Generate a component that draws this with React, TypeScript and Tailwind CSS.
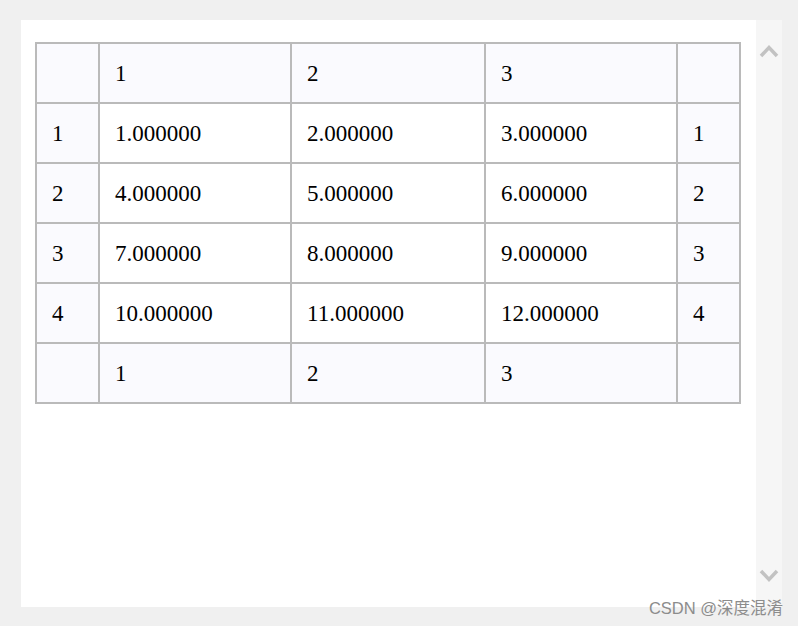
const rows = [
  ["1", "1.000000", "2.000000", "3.000000", "1"],
  ["2", "4.000000", "5.000000", "6.000000", "2"],
  ["3", "7.000000", "8.000000", "9.000000", "3"],
  ["4", "10.000000", "11.000000", "12.000000", "4"],
];

const edge = ["", "1", "2", "3", ""];

function Chevron({ up }: { up?: boolean }) {
  return (
    <svg width="20" height="14" viewBox="0 0 20 14" className="text-[#c2c2c2]">
      <path
        d={up ? "M2 12 L10 3.5 L18 12" : "M2 2 L10 10.5 L18 2"}
        fill="none"
        stroke="currentColor"
        strokeWidth="3.5"
      />
    </svg>
  );
}

export default function App() {
  const cell = "border-2 border-[#bababa] pl-[15px] pt-[3px] text-left font-normal";
  return (
    <div className="relative w-[798px] h-[626px] bg-[#f0f0f0] pt-[20px] pl-[21px] font-['Liberation_Serif',serif] text-[23px] text-black">
      <div className="flex">
        <div className="w-[735px] h-[587px] bg-white pl-[14px] pt-[22px]">
          <table className="border-collapse table-fixed w-[704px]">
            <colgroup>
              <col className="w-[63px]" />
              <col className="w-[192px]" />
              <col className="w-[194px]" />
              <col className="w-[192px]" />
              <col className="w-[63px]" />
            </colgroup>
            <thead>
              <tr className="h-[60px] bg-[#fafafe]">
                {edge.map((t, i) => (
                  <th key={i} className={cell}>{t}</th>
                ))}
              </tr>
            </thead>
            <tbody>
              {rows.map((r, ri) => (
                <tr key={ri} className="h-[60px]">
                  {r.map((t, i) => (
                    <td
                      key={i}
                      className={`${cell} ${i === 0 || i === 4 ? "bg-[#fafafe]" : "bg-white"}`}
                    >
                      {t}
                    </td>
                  ))}
                </tr>
              ))}
              <tr className="h-[60px] bg-[#fafafe]">
                {edge.map((t, i) => (
                  <td key={i} className={cell}>{t}</td>
                ))}
              </tr>
            </tbody>
          </table>
        </div>
        <div className="w-[26px] h-[587px] bg-[#f6f6f6] flex flex-col items-center justify-between pt-[24px] pb-[24px]">
          <Chevron up />
          <Chevron />
        </div>
      </div>
      <div className="absolute right-[15px] bottom-[10px] font-['Liberation_Sans',Arial,'Noto_Sans_CJK_SC',sans-serif] text-[16.5px] text-[#8c8c8c] leading-none">
        CSDN @深度混淆
      </div>
    </div>
  );
}
